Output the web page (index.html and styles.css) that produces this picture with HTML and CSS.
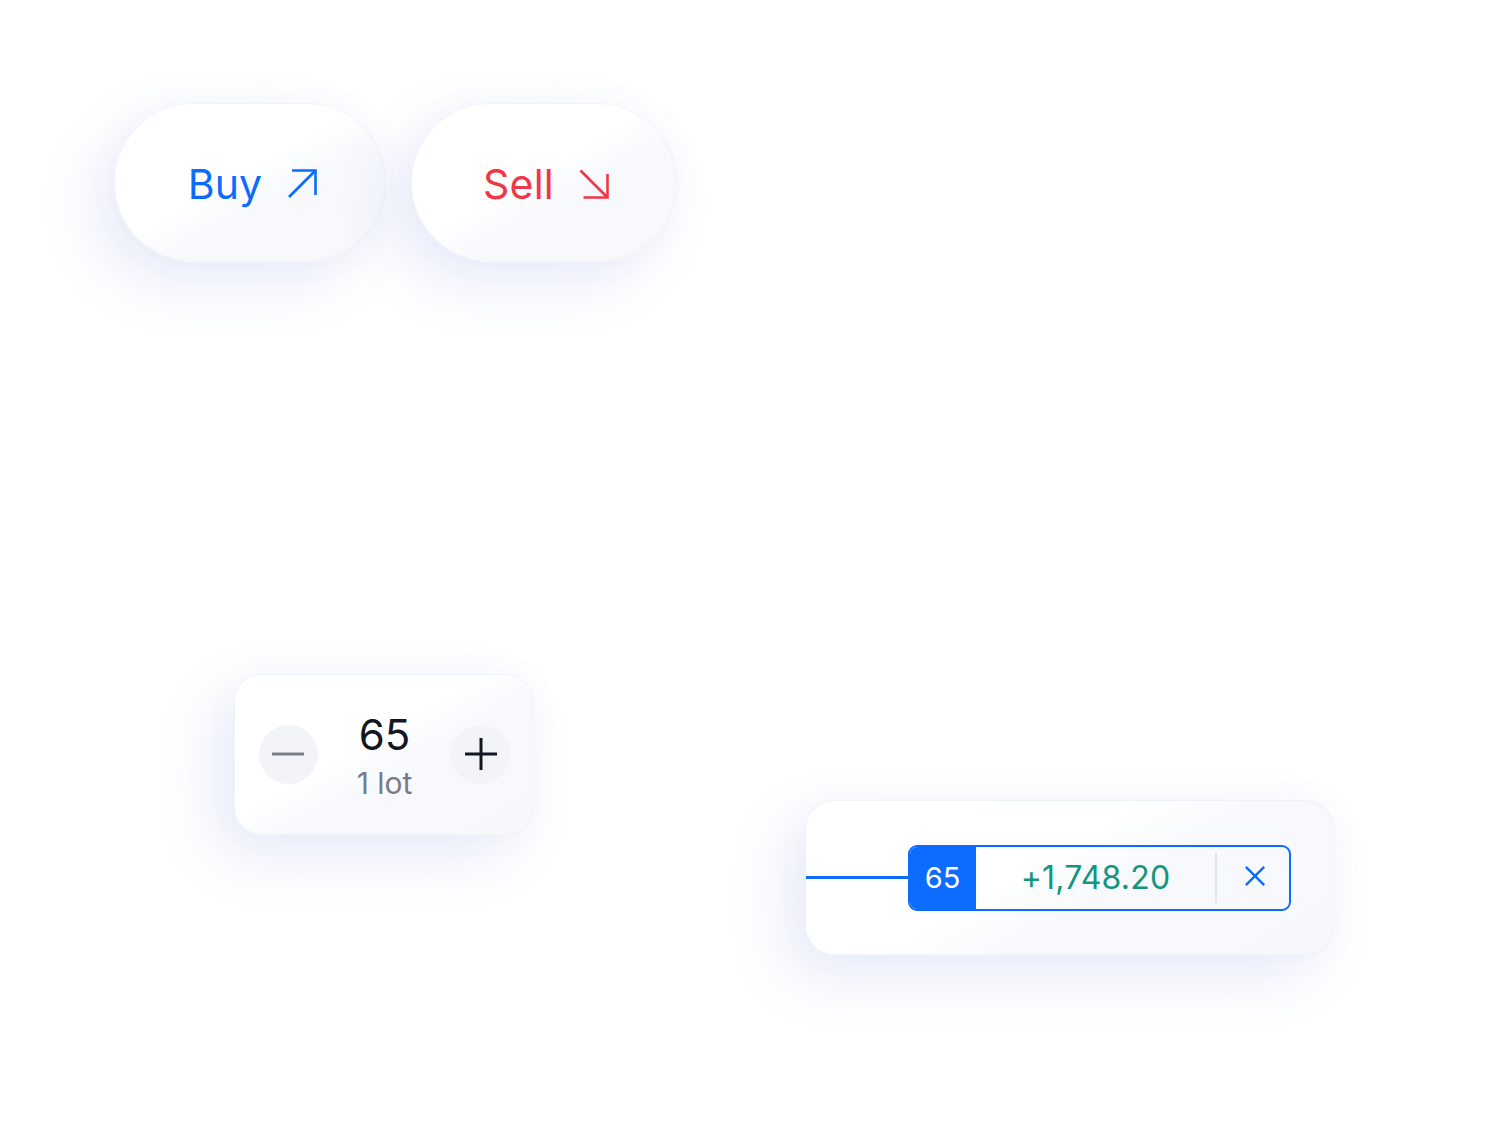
FILE: index.html
```html
<!DOCTYPE html>
<html lang="en">
<head>
<meta charset="utf-8">
<title>Trading controls</title>
<link rel="stylesheet" href="styles.css">
</head>
<body>
<main class="page">
  <div class="actions">
    <button class="pill pill-buy">
      <span class="pill-label">Buy</span>
      <svg class="pill-icon" viewBox="0 0 30 30" fill="none" stroke="currentColor" stroke-width="2.6" stroke-linecap="butt">
        <path d="M2 28 L28.5 1.5"/>
        <path d="M5 1.5 H28.5 V26"/>
      </svg>
    </button>
    <button class="pill pill-sell">
      <span class="pill-label">Sell</span>
      <svg class="pill-icon" viewBox="0 0 30 30" fill="none" stroke="currentColor" stroke-width="2.6" stroke-linecap="butt">
        <path d="M1.5 1.5 L28 28"/>
        <path d="M4.5 28.5 H28.5 V5"/>
      </svg>
    </button>
  </div>

  <div class="lower">
    <div class="card stepper">
      <button class="round-btn" aria-label="Decrease">
        <svg viewBox="0 0 34 4" class="minus-icon"><rect x="0" y="0.5" width="33" height="3" fill="#787c89"/></svg>
      </button>
      <div class="stepper-value">
        <span class="qty">65</span>
        <span class="lot">1 lot</span>
      </div>
      <button class="round-btn" aria-label="Increase">
        <svg viewBox="0 0 32 32" class="plus-icon"><rect x="0" y="14.5" width="32" height="3" fill="#131722"/><rect x="14.5" y="0" width="3" height="32" fill="#131722"/></svg>
      </button>
    </div>

    <div class="card position">
      <span class="price-line"></span>
      <div class="order-chip">
        <span class="chip-qty">65</span>
        <span class="chip-pnl">+1,748.20</span>
        <span class="chip-sep"></span>
        <span class="chip-close">
          <svg viewBox="0 0 24 24" fill="none" stroke="currentColor" stroke-width="2.6"><path d="M2 2 L22 22 M22 2 L2 22"/></svg>
        </span>
      </div>
    </div>
  </div>
</main>
</body>
</html>
```

FILE: styles.css
```css
* { box-sizing: border-box; }

html, body {
  margin: 0;
  padding: 0;
  background: #ffffff;
}

body {
  font-family: Inter, "Noto Sans", "Liberation Sans", sans-serif;
  width: 1489px;
  height: 1124px;
  overflow: hidden;
}

.page {
  padding-top: 103px;
  padding-left: 114px;
}

.actions {
  display: flex;
  gap: 25px;
}

.pill {
  height: 159px;
  border-radius: 80px;
  border: 1px solid rgba(232, 237, 246, 0.55);
  background: linear-gradient(150deg, #ffffff 0%, #ffffff 45%, #f7f9fd 60%, #f6f8fc 100%);
  box-shadow: -20px 22px 60px rgba(70, 110, 210, 0.12), 0 0 34px rgba(90, 120, 200, 0.04);
  display: flex;
  align-items: center;
  justify-content: center;
  gap: 25px;
  font-family: inherit;
  padding: 4px 0 0 0;
  cursor: pointer;
}

.pill-buy { width: 272px; color: #0b6cff; padding-left: 5px; }
.pill-sell { width: 266px; color: #f23645; padding-left: 4px; }

.pill-label {
  font-size: 41px;
  font-weight: 400;
  line-height: 1;
  letter-spacing: 0.2px;
}

.pill-icon {
  width: 30px;
  height: 30px;
  margin-top: -2px;
}

.lower {
  display: flex;
  align-items: flex-start;
  margin-top: 412px;
  padding-left: 120px;
  gap: 271px;
}

.card {
  border: 1px solid rgba(232, 237, 246, 0.55);
  background: linear-gradient(150deg, #ffffff 0%, #ffffff 42%, #f7f9fd 58%, #f6f8fc 100%);
  box-shadow: -20px 22px 60px rgba(70, 110, 210, 0.12), 0 0 34px rgba(90, 120, 200, 0.04);
}

.stepper {
  width: 300px;
  height: 161px;
  border-radius: 28px;
  display: flex;
  align-items: center;
  justify-content: space-between;
  padding: 0 23px 0 24px;
}

.round-btn {
  width: 59px;
  height: 59px;
  border-radius: 50%;
  border: none;
  background: #f3f4f7;
  display: flex;
  align-items: center;
  justify-content: center;
  padding: 0;
  margin-top: -1px;
}

.minus-icon { width: 33px; height: 4px; }
.plus-icon { width: 32px; height: 32px; }

.stepper-value {
  display: flex;
  flex-direction: column;
  align-items: center;
  margin-top: 3px;
}

.qty {
  font-size: 42px;
  line-height: 48px;
  color: #131722;
}

.lot {
  font-size: 30px;
  line-height: 36px;
  margin-top: 6px;
  color: #787b86;
}

.position {
  width: 530px;
  height: 155px;
  border-radius: 30px;
  margin-top: 126px;
  display: flex;
  align-items: center;
  justify-content: flex-end;
  padding-right: 43px;
  overflow: hidden;
  position: relative;
}

.price-line {
  flex: 1;
  height: 2.5px;
  background: #0b6cff;
  margin-left: -1px;
}

.order-chip {
  display: flex;
  align-items: stretch;
  width: 383px;
  height: 66px;
  border: 2.5px solid #0b6cff;
  border-radius: 9px;
  overflow: hidden;
}

.chip-qty {
  width: 67px;
  background: #0b6cff;
  color: #ffffff;
  font-size: 29px;
  display: flex;
  align-items: center;
  justify-content: center;
  margin-left: -1px;
}

.chip-pnl {
  width: 239px;
  display: flex;
  align-items: center;
  justify-content: center;
  font-size: 32px;
  color: #14957f;
  letter-spacing: 0.2px;
}

.chip-sep {
  width: 2px;
  margin: 6px 0;
  background: #dfe5ee;
}

.chip-close {
  flex: 1;
  display: flex;
  align-items: center;
  justify-content: center;
  color: #0b6cff;
  padding-left: 4px;
}

.chip-close svg {
  width: 22px;
  height: 22px;
  margin-top: -3px;
}
```
